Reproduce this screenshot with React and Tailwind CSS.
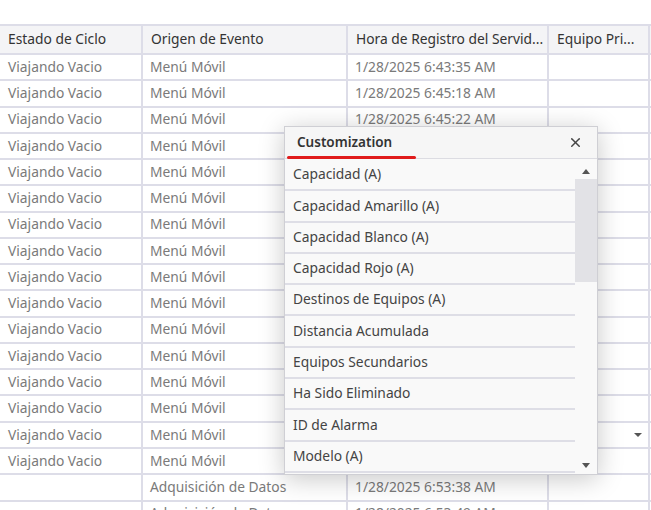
import React from 'react';
import { X } from 'lucide-react';

const rows = [
  ['Viajando Vacio', 'Menú Móvil', '1/28/2025 6:43:35 AM'],
  ['Viajando Vacio', 'Menú Móvil', '1/28/2025 6:45:18 AM'],
  ['Viajando Vacio', 'Menú Móvil', '1/28/2025 6:45:22 AM'],
  ['Viajando Vacio', 'Menú Móvil', '1/28/2025 6:46:02 AM'],
  ['Viajando Vacio', 'Menú Móvil', '1/28/2025 6:46:40 AM'],
  ['Viajando Vacio', 'Menú Móvil', '1/28/2025 6:47:11 AM'],
  ['Viajando Vacio', 'Menú Móvil', '1/28/2025 6:47:53 AM'],
  ['Viajando Vacio', 'Menú Móvil', '1/28/2025 6:48:20 AM'],
  ['Viajando Vacio', 'Menú Móvil', '1/28/2025 6:48:57 AM'],
  ['Viajando Vacio', 'Menú Móvil', '1/28/2025 6:49:31 AM'],
  ['Viajando Vacio', 'Menú Móvil', '1/28/2025 6:50:05 AM'],
  ['Viajando Vacio', 'Menú Móvil', '1/28/2025 6:50:44 AM'],
  ['Viajando Vacio', 'Menú Móvil', '1/28/2025 6:51:19 AM'],
  ['Viajando Vacio', 'Menú Móvil', '1/28/2025 6:51:58 AM'],
  ['Viajando Vacio', 'Menú Móvil', '1/28/2025 6:52:30 AM', true],
  ['Viajando Vacio', 'Menú Móvil', '1/28/2025 6:53:02 AM'],
  ['', 'Adquisición de Datos', '1/28/2025 6:53:38 AM'],
  ['', 'Adquisición de Datos', '1/28/2025 6:53:49 AM'],
];

const campos = [
  'Capacidad (A)',
  'Capacidad Amarillo (A)',
  'Capacidad Blanco (A)',
  'Capacidad Rojo (A)',
  'Destinos de Equipos (A)',
  'Distancia Acumulada',
  'Equipos Secundarios',
  'Ha Sido Eliminado',
  'ID de Alarma',
  'Modelo (A)',
];

const cols = ['w-[143px]', 'w-[205px]', 'w-[201px]', 'w-[101px]'];

export default function App() {
  return (
    <div className="relative w-[651px] h-[510px] overflow-hidden bg-white text-[13.8px]" style={{ fontFamily: '"Noto Sans", "Open Sans", sans-serif' }}>
      {/* Tabla de fondo */}
      <div className="pt-[24px]">
        <div className="flex h-[31px] bg-[#f4f4f6] border-y-2 border-[#dddde8] text-[#333]">
          {['Estado de Ciclo', 'Origen de Evento', 'Hora de Registro del Servid...', 'Equipo Pri...'].map((h, i) => (
            <div key={h} className={`${cols[i]} shrink-0 flex items-center px-[8px] border-r-2 border-[#dddde8] whitespace-nowrap overflow-hidden`}>{h}</div>
          ))}
        </div>
        {rows.map((r, idx) => (
          <div key={idx} className="flex h-[26.27px] border-b-2 border-[#dddde8] text-[#7a7a7a] whitespace-nowrap">
            <div className={`${cols[0]} shrink-0 flex items-center px-[8px] border-r-2 border-[#dddde8]`}>{r[0]}</div>
            <div className={`${cols[1]} shrink-0 flex items-center px-[7px] border-r-2 border-[#dddde8]`}>{r[1]}</div>
            <div className={`${cols[2]} shrink-0 flex items-center px-[7px] border-r-2 border-[#dddde8]`}>{r[2]}</div>
            <div className={`${cols[3]} shrink-0 flex items-center justify-end pr-[6px] border-r-2 border-[#dddde8]`}>
              {r[3] && <span className="w-0 h-0 border-x-[4px] border-x-transparent border-t-[4px] border-t-[#555]" />}
            </div>
          </div>
        ))}
      </div>

      {/* Ventana de personalización */}
      <div className="absolute left-[284px] top-[126px] w-[314px] h-[349px] bg-[#f9f9f9] border border-[#cfcfd4] shadow-[0_4px_24px_rgba(0,0,0,0.22)] flex flex-col">
        <div className="relative h-[32px] shrink-0 flex items-center justify-between pl-[12px] pr-[14px] bg-[#f6f6f6] border-b border-[#dcdce2]">
          <span className="font-semibold text-[#333] text-[13.5px]">Customization</span>
          <X size={15} strokeWidth={2.4} className="text-[#444]" />
          <div className="absolute left-[2px] bottom-[-1px] w-[129px] h-[3px] rounded-full bg-[#e01b1b]" />
        </div>
        <div className="flex flex-1 min-h-0">
          <div className="w-[290px] shrink-0 pt-[1px]">
            {campos.map((c) => (
              <div key={c} className="h-[31.3px] flex items-center pl-[8px] border-b-2 border-[#dedee6] text-[#444] whitespace-nowrap">{c}</div>
            ))}
          </div>
          <div className="flex-1 flex flex-col items-center pt-[10px] pb-[6px]">
            <span className="w-0 h-0 border-x-[4px] border-x-transparent border-b-[5px] border-b-[#555]" />
            <div className="mt-[5px] w-full h-[103px] bg-[#e2e2e6]" />
            <div className="flex-1" />
            <span className="w-0 h-0 border-x-[4px] border-x-transparent border-t-[5px] border-t-[#555]" />
          </div>
        </div>
      </div>
    </div>
  );
}
